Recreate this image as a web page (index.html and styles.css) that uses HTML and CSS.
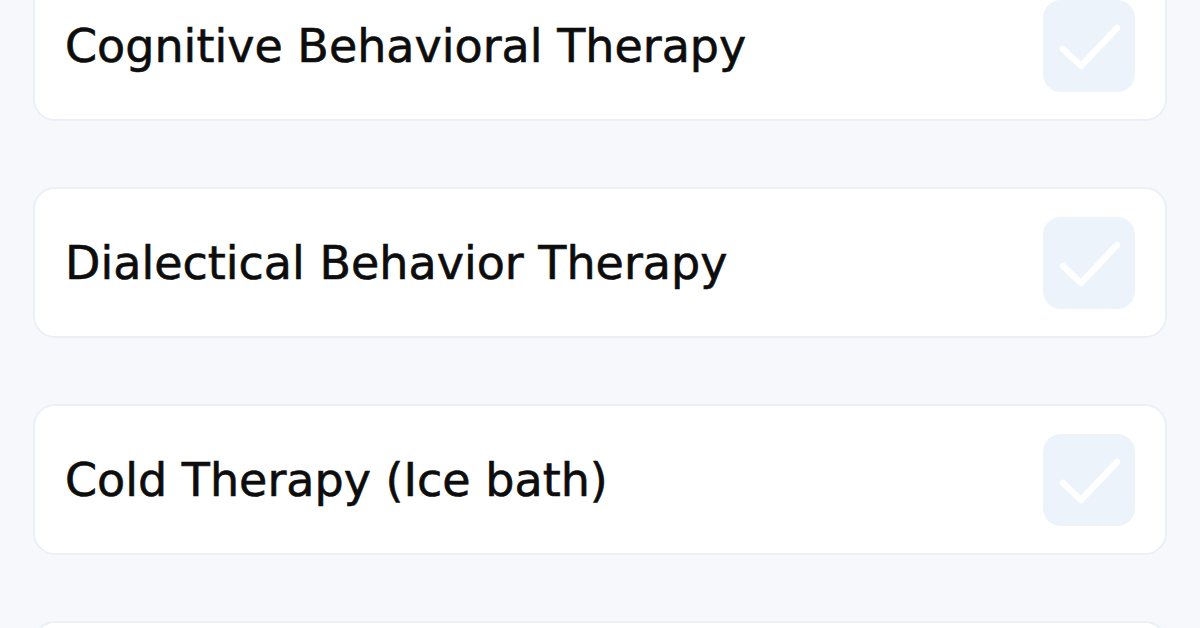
FILE: index.html
```html
<!DOCTYPE html>
<html>
<head>
<meta charset="utf-8">
<link rel="stylesheet" href="styles.css">
</head>
<body>
<div class="list">
  <div class="card">
    <span class="label">Cognitive Behavioral Therapy</span>
    <span class="check"><svg viewBox="0 0 92 92" width="92" height="92"><path d="M20 49 L38 66 L74 28" fill="none" stroke="#fff" stroke-width="6.5" stroke-linecap="round" stroke-linejoin="round"/></svg></span>
  </div>
  <div class="card">
    <span class="label">Dialectical Behavior Therapy</span>
    <span class="check"><svg viewBox="0 0 92 92" width="92" height="92"><path d="M20 49 L38 66 L74 28" fill="none" stroke="#fff" stroke-width="6.5" stroke-linecap="round" stroke-linejoin="round"/></svg></span>
  </div>
  <div class="card">
    <span class="label">Cold Therapy (Ice bath)</span>
    <span class="check"><svg viewBox="0 0 92 92" width="92" height="92"><path d="M20 49 L38 66 L74 28" fill="none" stroke="#fff" stroke-width="6.5" stroke-linecap="round" stroke-linejoin="round"/></svg></span>
  </div>
  <div class="card"></div>
</div>
</body>
</html>
```
FILE: styles.css
```css
html, body {
  margin: 0;
  padding: 0;
  background: #f6f8fc;
  overflow: hidden;
}
.list {
  display: flex;
  flex-direction: column;
  gap: 66px;
  margin-top: -30px;
  padding: 0 33px;
}
.card {
  box-sizing: border-box;
  height: 151px;
  flex-shrink: 0;
  background: #ffffff;
  border: 2px solid #ebf0f7;
  border-radius: 22px;
  display: flex;
  align-items: center;
  justify-content: space-between;
  padding: 0 30px 0 30px;
}
.label {
  font-family: "DejaVu Sans", sans-serif;
  font-size: 46px;
  color: #0d0d0d;
  -webkit-text-stroke: 0.6px #0d0d0d;
}
.check {
  width: 92px;
  height: 92px;
  border-radius: 18px;
  background: #edf3fb;
  display: flex;
}
```
